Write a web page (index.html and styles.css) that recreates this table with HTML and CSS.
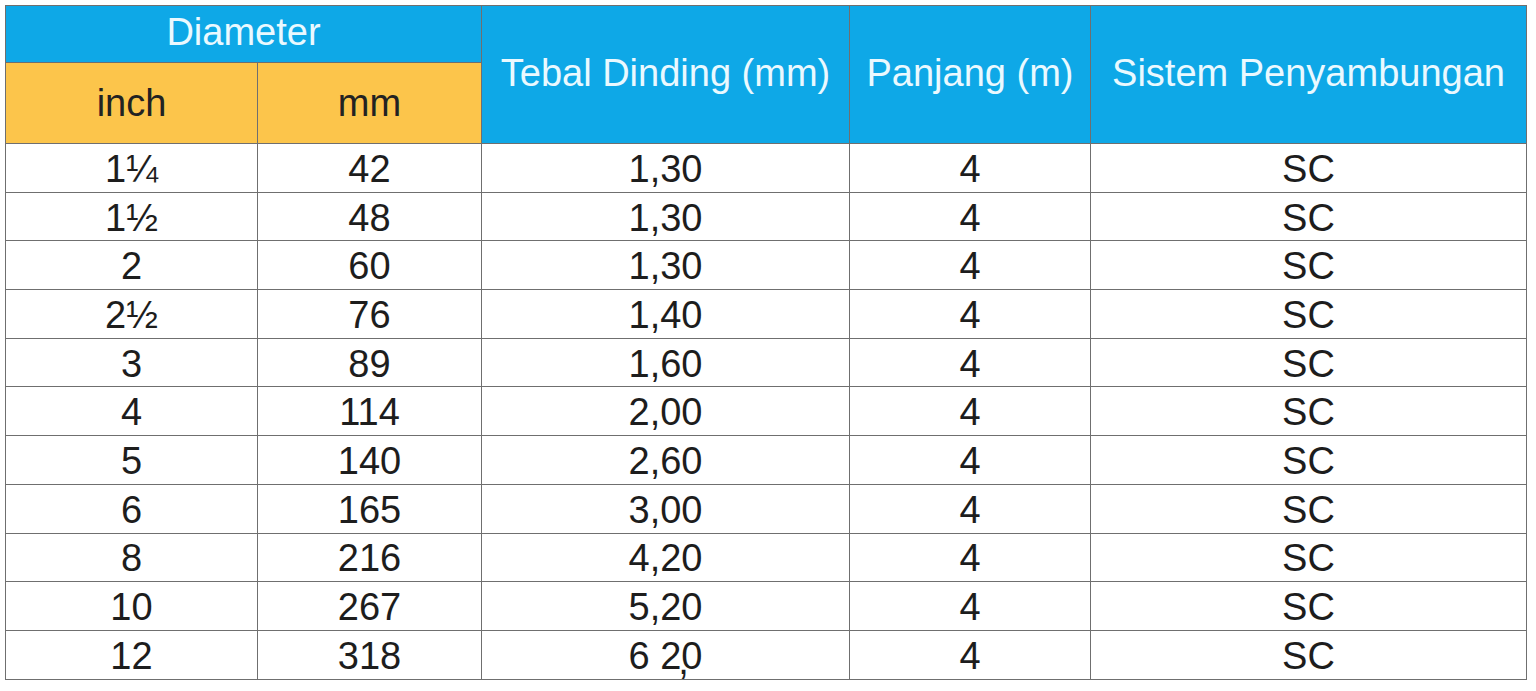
FILE: index.html
```html
<!DOCTYPE html>
<html lang="id">
<head>
<meta charset="utf-8">
<title>Tabel Pipa</title>
<link rel="stylesheet" href="styles.css">
</head>
<body>
<table class="spec">
  <colgroup>
    <col class="c1"><col class="c2"><col class="c3"><col class="c4"><col class="c5">
  </colgroup>
  <thead>
    <tr class="h1">
      <th colspan="2" class="blue">Diameter</th>
      <th rowspan="2" class="blue tall">Tebal Dinding (mm)</th>
      <th rowspan="2" class="blue tall">Panjang (m)</th>
      <th rowspan="2" class="blue tall">Sistem Penyambungan</th>
    </tr>
    <tr class="h2">
      <th class="orange">inch</th>
      <th class="orange">mm</th>
    </tr>
  </thead>
  <tbody>
    <tr><td>1¼</td><td>42</td><td>1,30</td><td>4</td><td>SC</td></tr>
    <tr><td>1½</td><td>48</td><td>1,30</td><td>4</td><td>SC</td></tr>
    <tr><td>2</td><td>60</td><td>1,30</td><td>4</td><td>SC</td></tr>
    <tr><td>2½</td><td>76</td><td>1,40</td><td>4</td><td>SC</td></tr>
    <tr><td>3</td><td>89</td><td>1,60</td><td>4</td><td>SC</td></tr>
    <tr><td>4</td><td>114</td><td>2,00</td><td>4</td><td>SC</td></tr>
    <tr><td>5</td><td>140</td><td>2,60</td><td>4</td><td>SC</td></tr>
    <tr><td>6</td><td>165</td><td>3,00</td><td>4</td><td>SC</td></tr>
    <tr><td>8</td><td>216</td><td>4,20</td><td>4</td><td>SC</td></tr>
    <tr><td>10</td><td>267</td><td>5,20</td><td>4</td><td>SC</td></tr>
    <tr><td>12</td><td>318</td><td>6 2<span class="lowcomma">,</span>0</td><td>4</td><td>SC</td></tr>
  </tbody>
</table>
</body>
</html>
```

FILE: styles.css
```css
html, body {
  margin: 0;
  padding: 0;
  background: #ffffff;
}

body {
  padding: 5px 0 0 5px;
  font-family: "Liberation Sans", Arial, Helvetica, sans-serif;
}

.spec {
  border-collapse: collapse;
  table-layout: fixed;
  width: 1521px;
  font-size: 38px;
  color: #1d1d1d;
}

.c1 { width: 252px; }
.c2 { width: 224px; }
.c3 { width: 368px; }
.c4 { width: 241px; }
.c5 { width: 436px; }

.spec th,
.spec td {
  border: 1px solid #6f6f6f;
  padding: 0;
  text-align: center;
  vertical-align: middle;
  font-weight: normal;
  line-height: 1;
  white-space: nowrap;
}

.h1 { height: 57px; }
.h2 { height: 81px; }

.blue {
  background: #0ea8e7;
  color: #eaf9ff;
}

.blue.tall {
  padding-bottom: 4px;
}

.h1 .blue:first-child {
  padding-bottom: 4px;
}

.orange {
  background: #fcc54b;
  color: #222222;
}

.spec tbody tr {
  height: 48.7px;
}

.spec td {
  padding-top: 2px;
}

.lowcomma {
  display: inline-block;
  width: 0;
  transform: translate(-3px, 5px);
}
```
